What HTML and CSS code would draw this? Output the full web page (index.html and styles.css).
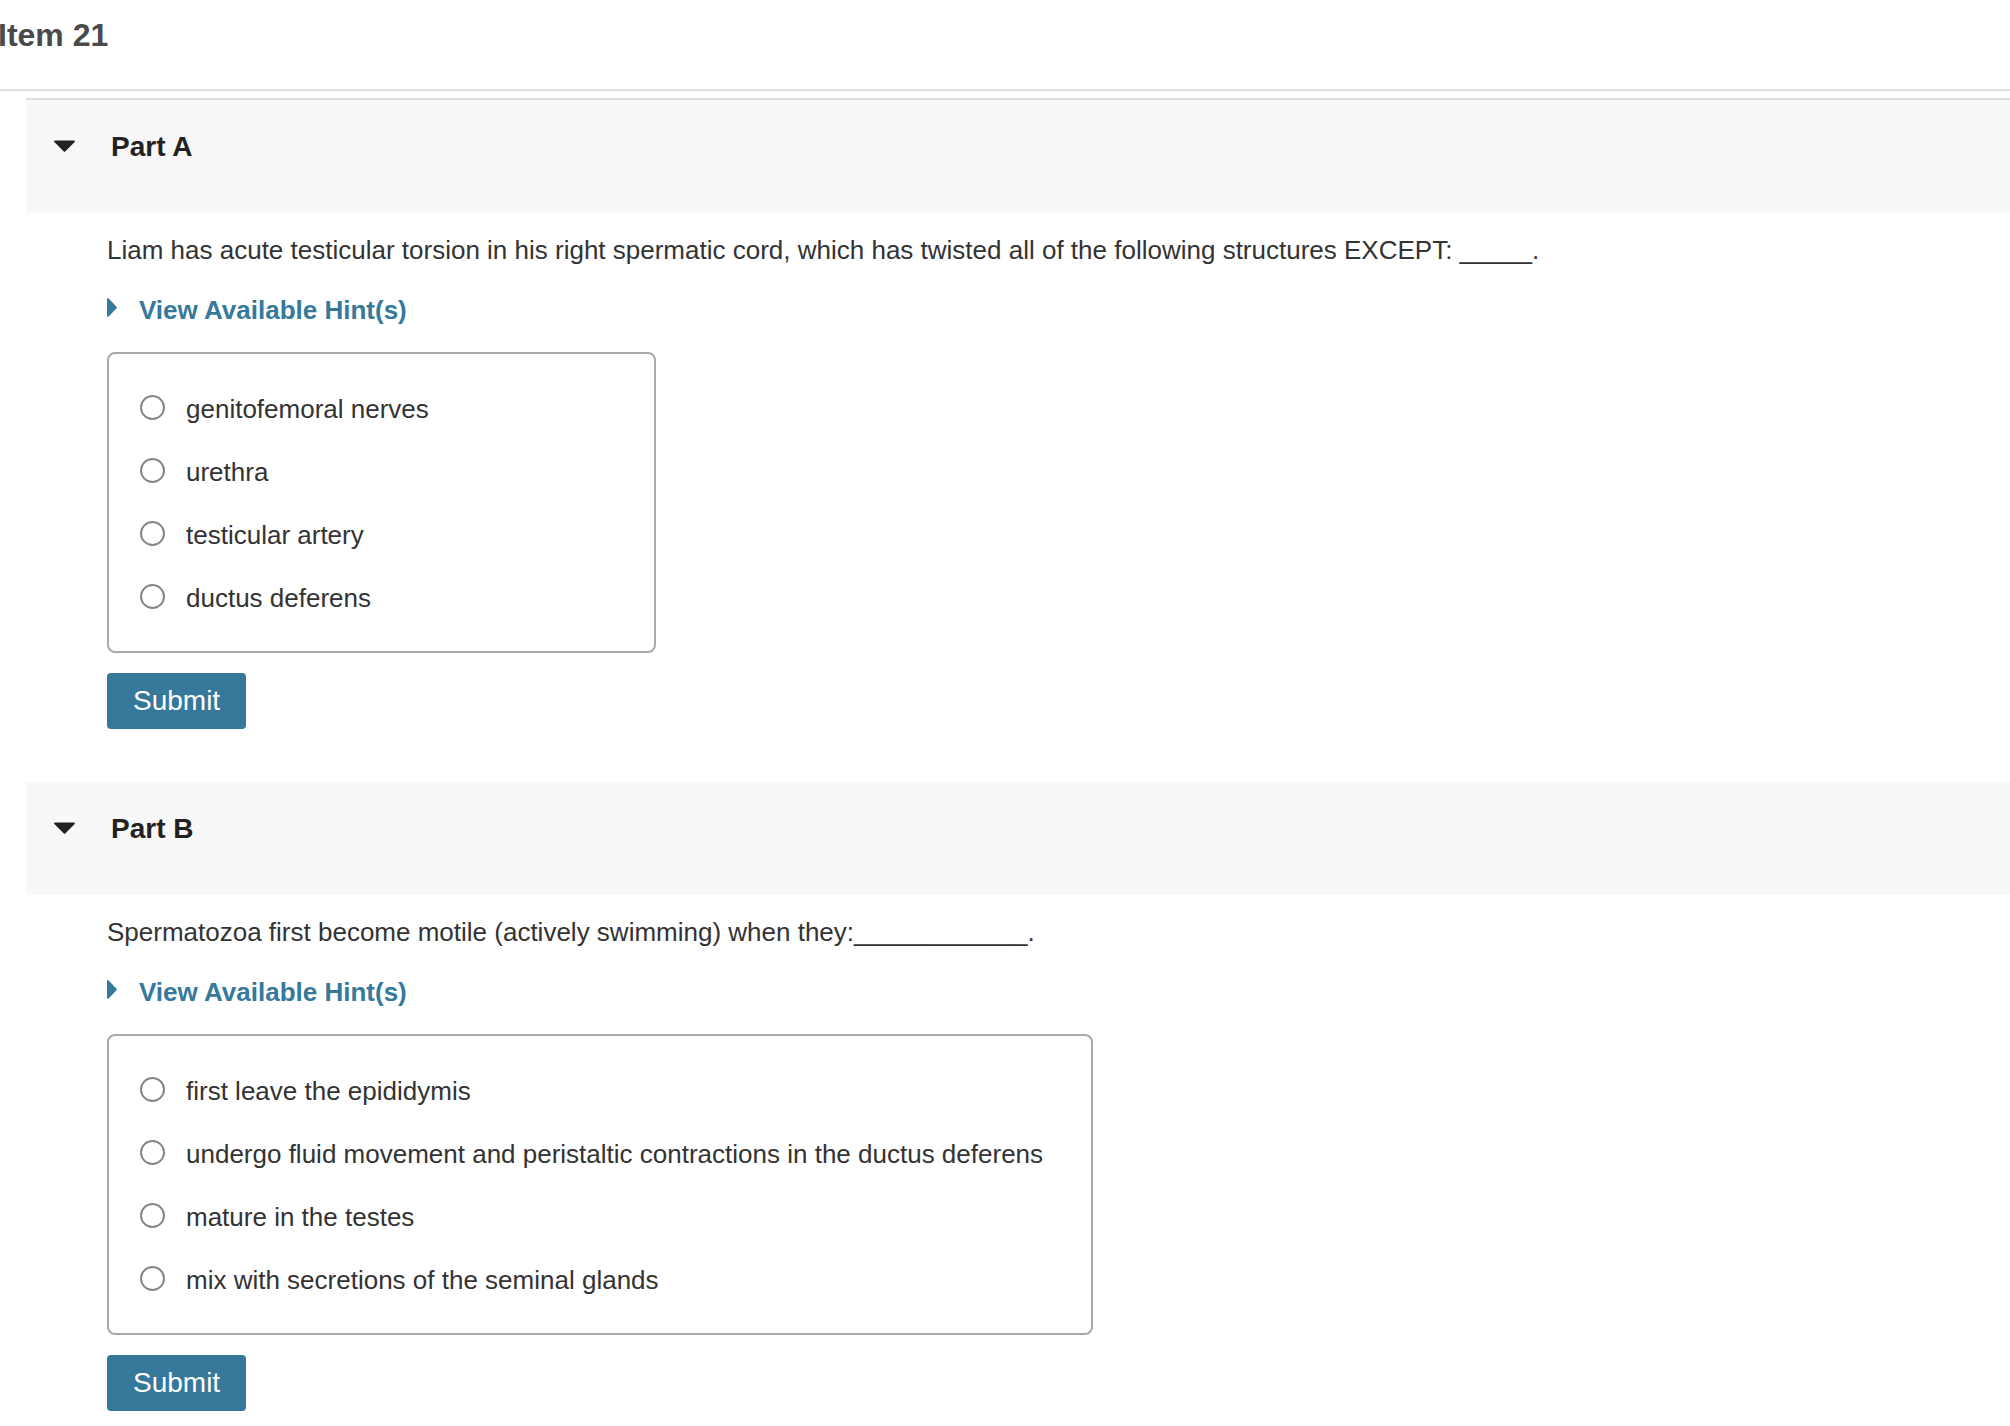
FILE: index.html
```html
<!DOCTYPE html>
<html>
<head>
    <title>Item 21</title>
    <link rel="stylesheet" href="styles.css">
</head>
<body>
    <div class="item-header">
        <h1 class="item-title">Item 21</h1>
    </div>

    <div class="parts">
        <div class="part">
            <div class="part-header">
                <svg class="caret" width="21" height="12" viewBox="0 0 21 12"><path d="M1 0.5h19a1 1 0 0 1 0.7 1.6l-9.5 9.4a1 1 0 0 1-1.4 0L0.3 2.1A1 1 0 0 1 1 0.5z" fill="#222"/></svg>
                <h2>Part A</h2>
            </div>
            <div class="part-body">
                <p class="question">Liam has acute testicular torsion in his right spermatic cord, which has twisted all of the following structures EXCEPT: _____.</p>
                <a class="hint" href="#">
                    <svg class="hint-caret" width="10" height="19" viewBox="0 0 10 19"><path d="M0 1.2a1 1 0 0 1 1.7-0.7l7.8 8.3a1 1 0 0 1 0 1.4l-7.8 8.3A1 1 0 0 1 0 17.8z" fill="#36799a"/></svg>
                    View Available Hint(s)
                </a>
                <div class="choices">
                    <label class="option"><input type="radio" name="partA" class="radio"><span>genitofemoral nerves</span></label>
                    <label class="option"><input type="radio" name="partA" class="radio"><span>urethra</span></label>
                    <label class="option"><input type="radio" name="partA" class="radio"><span>testicular artery</span></label>
                    <label class="option"><input type="radio" name="partA" class="radio"><span>ductus deferens</span></label>
                </div>
                <button class="submit">Submit</button>
            </div>
        </div>

        <div class="part">
            <div class="part-header">
                <svg class="caret" width="21" height="12" viewBox="0 0 21 12"><path d="M1 0.5h19a1 1 0 0 1 0.7 1.6l-9.5 9.4a1 1 0 0 1-1.4 0L0.3 2.1A1 1 0 0 1 1 0.5z" fill="#222"/></svg>
                <h2>Part B</h2>
            </div>
            <div class="part-body">
                <p class="question">Spermatozoa first become motile (actively swimming) when they:____________.</p>
                <a class="hint" href="#">
                    <svg class="hint-caret" width="10" height="19" viewBox="0 0 10 19"><path d="M0 1.2a1 1 0 0 1 1.7-0.7l7.8 8.3a1 1 0 0 1 0 1.4l-7.8 8.3A1 1 0 0 1 0 17.8z" fill="#36799a"/></svg>
                    View Available Hint(s)
                </a>
                <div class="choices">
                    <label class="option"><input type="radio" name="partB" class="radio"><span>first leave the epididymis</span></label>
                    <label class="option"><input type="radio" name="partB" class="radio"><span>undergo fluid movement and peristaltic contractions in the ductus deferens</span></label>
                    <label class="option"><input type="radio" name="partB" class="radio"><span>mature in the testes</span></label>
                    <label class="option"><input type="radio" name="partB" class="radio"><span>mix with secretions of the seminal glands</span></label>
                </div>
                <button class="submit">Submit</button>
            </div>
        </div>
    </div>
</body>
</html>
```

FILE: styles.css
```css
body {
    font-family: "Liberation Sans", Arial, sans-serif;
    background-color: #ffffff;
    color: #333333;
    margin: 0;
    padding: 0;
}
.item-header {
    padding: 15px 0 34px 0;
    border-bottom: 2px solid #dfdfdf;
}
.item-title {
    margin: 0 0 0 -2px;
    font-size: 32px;
    line-height: 40px;
    font-weight: bold;
    color: #4a4a4a;
}
.parts {
    padding: 7px 0 0 26px;
}
.part {
    margin-bottom: 53px;
}
.part:last-child {
    margin-bottom: 0;
}
.part-header {
    display: flex;
    align-items: flex-start;
    height: 113px;
    box-sizing: border-box;
    padding: 30px 0 0 28px;
    background-color: #f8f8f8;
}
.part:first-child .part-header {
    border-top: 2px solid #dfdfdf;
    height: 115px;
}
.part-header .caret {
    margin-top: 10px;
    margin-right: 36px;
    flex: none;
}
.part-header h2 {
    margin: 0;
    font-size: 28px;
    line-height: 34px;
    font-weight: bold;
    color: #222222;
}
.part-body {
    padding: 19px 0 0 81px;
}
.question {
    margin: 0 0 24px 0;
    font-size: 26px;
    line-height: 36px;
}
.hint {
    display: flex;
    align-items: flex-start;
    font-size: 26px;
    line-height: 36px;
    font-weight: bold;
    color: #36799a;
    text-decoration: none;
    margin-bottom: 24px;
}
.hint-caret {
    margin: 6px 22px 0 0;
    flex: none;
}
.choices {
    display: flex;
    flex-direction: column;
    gap: 27px;
    width: fit-content;
    min-width: 549px;
    box-sizing: border-box;
    padding: 37px 48px 35px 31px;
    border: 2px solid #a9a9a9;
    border-radius: 8px;
}
.option {
    display: flex;
    align-items: flex-start;
    font-size: 26px;
    line-height: 36px;
    color: #333333;
}
.radio {
    appearance: none;
    -webkit-appearance: none;
    width: 25px;
    height: 25px;
    margin: 4px 21px 0 0;
    border: 2px solid #858585;
    border-radius: 50%;
    background: #ffffff;
    flex: none;
}
.submit {
    display: block;
    margin-top: 20px;
    height: 56px;
    padding: 0 26px;
    border: none;
    border-radius: 4px;
    background-color: #36789a;
    color: #ffffff;
    font-family: "Liberation Sans", Arial, sans-serif;
    font-size: 28px;
    line-height: 56px;
}
```
